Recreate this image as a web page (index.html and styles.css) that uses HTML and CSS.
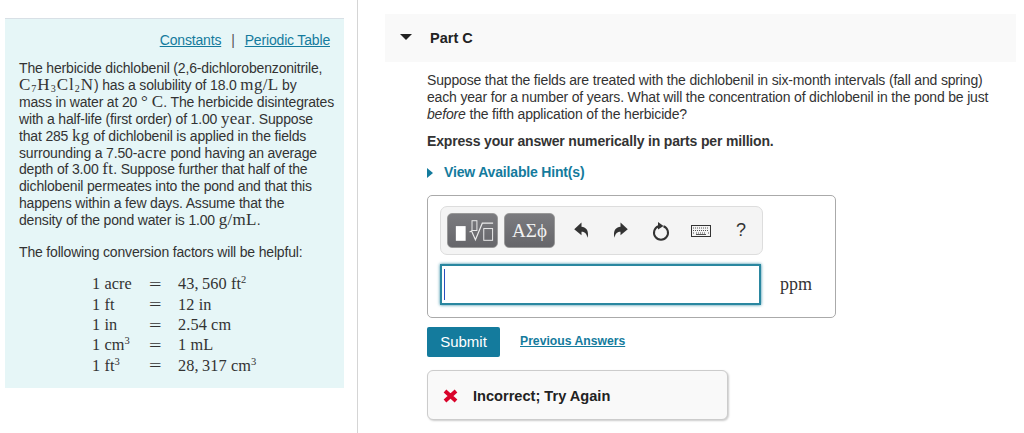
FILE: index.html
```html
<!DOCTYPE html>
<html lang="en">
<head>
    <meta charset="UTF-8">
    <title>Part C</title>
    <link rel="stylesheet" href="styles.css">
</head>
<body>
    <div class="layout">
        <div class="left-col">
            <div class="info">
                <div class="info-links">
                    <a href="#">Constants</a><span class="sep">|</span><a href="#">Periodic Table</a>
                </div>
                <p class="intro">The herbicide dichlobenil (2,6-dichlorobenzonitrile,<br>
                    <span class="m chem">C<sub>7</sub>H<sub>3</sub>Cl<sub>2</sub>N</span>) has a solubility of 18.0 <span class="m">mg/L</span> by<br>
                    mass in water at 20 <span class="m">&deg;&#8201;C</span>. The herbicide disintegrates<br>
                    with a half-life (first order) of 1.00 <span class="m">year</span>. Suppose<br>
                    that 285 <span class="m">kg</span> of dichlobenil is applied in the fields<br>
                    surrounding a 7.50-<span class="m">acre</span> pond having an average<br>
                    depth of 3.00 <span class="m">ft</span>. Suppose further that half of the<br>
                    dichlobenil permeates into the pond and that this<br>
                    happens within a few days. Assume that the<br>
                    density of the pond water is 1.00 <span class="m">g/mL</span>.</p>
                <p class="helpful">The following conversion factors will be helpful:</p>
                <div class="factors">
                    <span>1 acre</span><span class="eq">=</span><span>43,&#8201;560 ft<sup>2</sup></span>
                    <span>1 ft</span><span class="eq">=</span><span>12 in</span>
                    <span>1 in</span><span class="eq">=</span><span>2.54 cm</span>
                    <span>1 cm<sup>3</sup></span><span class="eq">=</span><span>1 mL</span>
                    <span>1 ft<sup>3</sup></span><span class="eq">=</span><span>28,&#8201;317 cm<sup>3</sup></span>
                </div>
            </div>
        </div>
        <div class="right-col">
            <div class="part-head">
                <svg class="caret-down" width="12" height="6" viewBox="0 0 12 6"><path d="M0 0h12L6 6z" fill="#222"/></svg>
                <span>Part C</span>
            </div>
            <div class="part-body">
                <p class="question">Suppose that the fields are treated with the dichlobenil in six-month intervals (fall and spring) each year for a number of years. What will the concentration of dichlobenil in the pond be just <em>before</em> the fifth application of the herbicide?</p>
                <p class="express">Express your answer numerically in parts per million.</p>
                <a class="hints" href="#">
                    <svg width="6" height="10" viewBox="0 0 6 10"><path d="M0 0l6 5-6 5z" fill="#147b9d"/></svg>
                    View Available Hint(s)
                </a>
                <div class="answer-box">
                    <div class="answer-main">
                        <div class="toolbar">
                            <div class="tool-btn">
                                <svg width="50" height="34" viewBox="0 0 50 34" fill="none" stroke="#ececec">
                                    <rect x="8" y="12" width="10" height="15" fill="#fff" stroke="none"/>
                                    <rect x="24.500" y="6.500" width="5" height="10"/>
                                    <path d="M22 18l2-1 4 9 7-17h11" stroke-width="1.200"/>
                                    <rect x="36.500" y="14.500" width="9" height="12"/>
                                </svg>
                            </div>
                            <div class="tool-btn greek">&Alpha;&Sigma;&#981;</div>
                            <div class="tool-icons">
                                <svg width="15" height="17" viewBox="1 1 12 14"><path d="M7 1.500L1 7l6 5V9c2.500 0 4 1 5 5 1.200-5-.5-8.500-5-9z" fill="#333"/></svg>
                                <svg width="15" height="17" viewBox="3 1 12 14"><path d="M9 1.500L15 7l-6 5V9c-2.500 0-4 1-5 5-1.200-5 .5-8.500 5-9z" fill="#333"/></svg>
                                <svg width="18" height="20" viewBox="0 0 18 20" fill="none"><path d="M11.500 5.200a7 7 0 1 1-5 0" stroke="#333" stroke-width="2"/><path d="M6 1l5.500 4L6 8.500z" fill="#333"/></svg>
                                <svg class="keyboard" width="20" height="12" viewBox="0 0 20 12"><rect x=".5" y=".5" width="19" height="11" fill="#f4f4f4" stroke="#333"/><path d="M2 3h16M2 5.500h16M2 8h1M5 8h10M17 8h1" stroke="#555" stroke-dasharray="1 1" fill="none"/><path d="M5 9.500h10" stroke="#555"/></svg>
                                <span class="help">?</span>
                            </div>
                        </div>
                        <div class="input-field"><span class="cursor"></span></div>
                    </div>
                    <span class="unit">ppm</span>
                </div>
                <div class="actions">
                    <button class="submit">Submit</button>
                    <a class="prev" href="#">Previous Answers</a>
                </div>
                <div class="feedback">
                    <svg width="15" height="14" viewBox="0 0 15 14"><path d="M2 2l11 10M13 2L2 12" stroke="#d9042b" stroke-width="4"/></svg>
                    <span>Incorrect; Try Again</span>
                </div>
            </div>
        </div>
    </div>
</body>
</html>
```

FILE: styles.css
```css
html, body {
    margin: 0;
    padding: 0;
    height: 433px;
    overflow: hidden;
    background: white;
}
body {
    font-family: "Liberation Sans", Arial, sans-serif;
    font-size: 14px;
    letter-spacing: -0.17px;
    color: #333;
}
p {
    margin: 0;
}
a {
    color: #147b9d;
}
.layout {
    display: flex;
    height: 433px;
}
.left-col {
    box-sizing: border-box;
    width: 358px;
    padding: 18px 13px 0 5px;
    border-right: 1px solid #d5d5d5;
}
.info {
    box-sizing: border-box;
    height: 370px;
    padding: 13px 14px 0;
    background: #e6f6f7;
    border-top: 1px solid #d8e0e6;
}
.info-links {
    text-align: right;
    line-height: 17px;
    padding-bottom: 11px;
}
.sep {
    margin: 0 10px;
    color: #555;
}
.intro {
    line-height: 16.9px;
    white-space: nowrap;
}
.m {
    font-family: "Liberation Serif", "Times New Roman", serif;
    font-size: 17px;
    letter-spacing: 0.3px;
    line-height: 0;
}
.chem {
    letter-spacing: 1px;
}
sub, sup {
    font-size: 10.5px;
    line-height: 0;
}
sub {
    font-size: 10px;
    vertical-align: -2px;
}
.helpful {
    margin-top: 15px;
    line-height: 17px;
}
.factors {
    display: grid;
    grid-template-columns: 57px 29px auto;
    grid-auto-rows: 20.4px;
    align-items: center;
    margin: 13px 0 0 73px;
    font-family: "Liberation Serif", "Times New Roman", serif;
    font-size: 16.300px;
    letter-spacing: 0.1px;
    color: #333;
}
.eq {
    justify-self: start;
    font-size: 17px;
    line-height: 17px;
    transform: scaleX(1.3);
    transform-origin: left center;
}
.right-col {
    flex: 1;
    padding: 14px 8px 0 27px;
}
.part-head {
    display: flex;
    align-items: center;
    height: 48px;
    background: #f9f9f9;
    font-size: 14.500px;
    font-weight: bold;
    letter-spacing: 0;
    color: #222;
}
.caret-down {
    margin: 0 18px 0 15px;
    position: relative;
    top: -1px;
}
.part-body {
    padding: 10px 0 0 42px;
}
.question {
    line-height: 16.8px;
    width: 575px;
}
.express {
    font-weight: bold;
    margin-top: 11px;
    line-height: 17px;
}
.hints {
    display: flex;
    align-items: center;
    gap: 11px;
    margin-top: 14px;
    font-weight: bold;
    text-decoration: none;
    line-height: 17px;
}
.answer-box {
    box-sizing: border-box;
    display: flex;
    width: 409px;
    height: 123px;
    margin-top: 14px;
    padding: 10px 12px;
    border: 1px solid #aaa;
    border-radius: 5px;
}
.answer-main {
    width: 323px;
}
.toolbar {
    box-sizing: border-box;
    display: flex;
    align-items: center;
    gap: 6px;
    height: 49px;
    padding: 0 6px;
    background: #f4f4f4;
    border: 1px solid #ddd;
    border-radius: 7px;
}
.tool-btn {
    box-sizing: border-box;
    display: flex;
    align-items: center;
    justify-content: center;
    width: 51px;
    height: 35px;
    border-radius: 5px;
    background: linear-gradient(#7b7b7f, #66666a);
    border: 1px solid #999;
}
.greek {
    font-family: "Liberation Serif", serif;
    font-size: 19px;
    letter-spacing: 0;
    color: #f2f2f2;
}
.tool-icons {
    display: flex;
    align-items: center;
    gap: 24px;
    padding-left: 13px;
}
.keyboard {
    margin: 0 1px 0 -3px;
}
.help {
    font-size: 18px;
    color: #333;
}
.input-field {
    box-sizing: border-box;
    width: 321px;
    height: 41px;
    margin-top: 9px;
    padding: 3px 2px;
    background: white;
    border: 2px solid #2a87a0;
    box-shadow: 0 0 3px #2a87a0;
}
.cursor {
    display: block;
    width: 1px;
    height: 31px;
    background: #2a4fc0;
}
.unit {
    font-family: "Liberation Serif", serif;
    font-size: 18px;
    letter-spacing: 0;
    margin: 68px 0 0 17px;
}
.actions {
    display: flex;
    align-items: flex-start;
    margin-top: 9px;
}
.submit {
    width: 73px;
    height: 30px;
    padding: 0 0 1px;
    background: #147b9d;
    color: white;
    font-family: inherit;
    font-size: 15px;
    border: none;
    border-radius: 2px;
}
.prev {
    margin: 6px 0 0 20px;
    font-size: 12.200px;
    font-weight: bold;
    letter-spacing: 0;
    line-height: 16px;
}
.feedback {
    box-sizing: border-box;
    display: flex;
    align-items: center;
    gap: 15px;
    width: 301px;
    height: 50px;
    margin-top: 13px;
    padding: 2px 0 0 15px;
    background: #f9f9f9;
    border: 1px solid #ccc;
    border-radius: 6px;
    box-shadow: 1px 1px 2px #ccc;
    font-size: 14.600px;
    font-weight: bold;
    letter-spacing: 0;
    color: #222;
}
```
